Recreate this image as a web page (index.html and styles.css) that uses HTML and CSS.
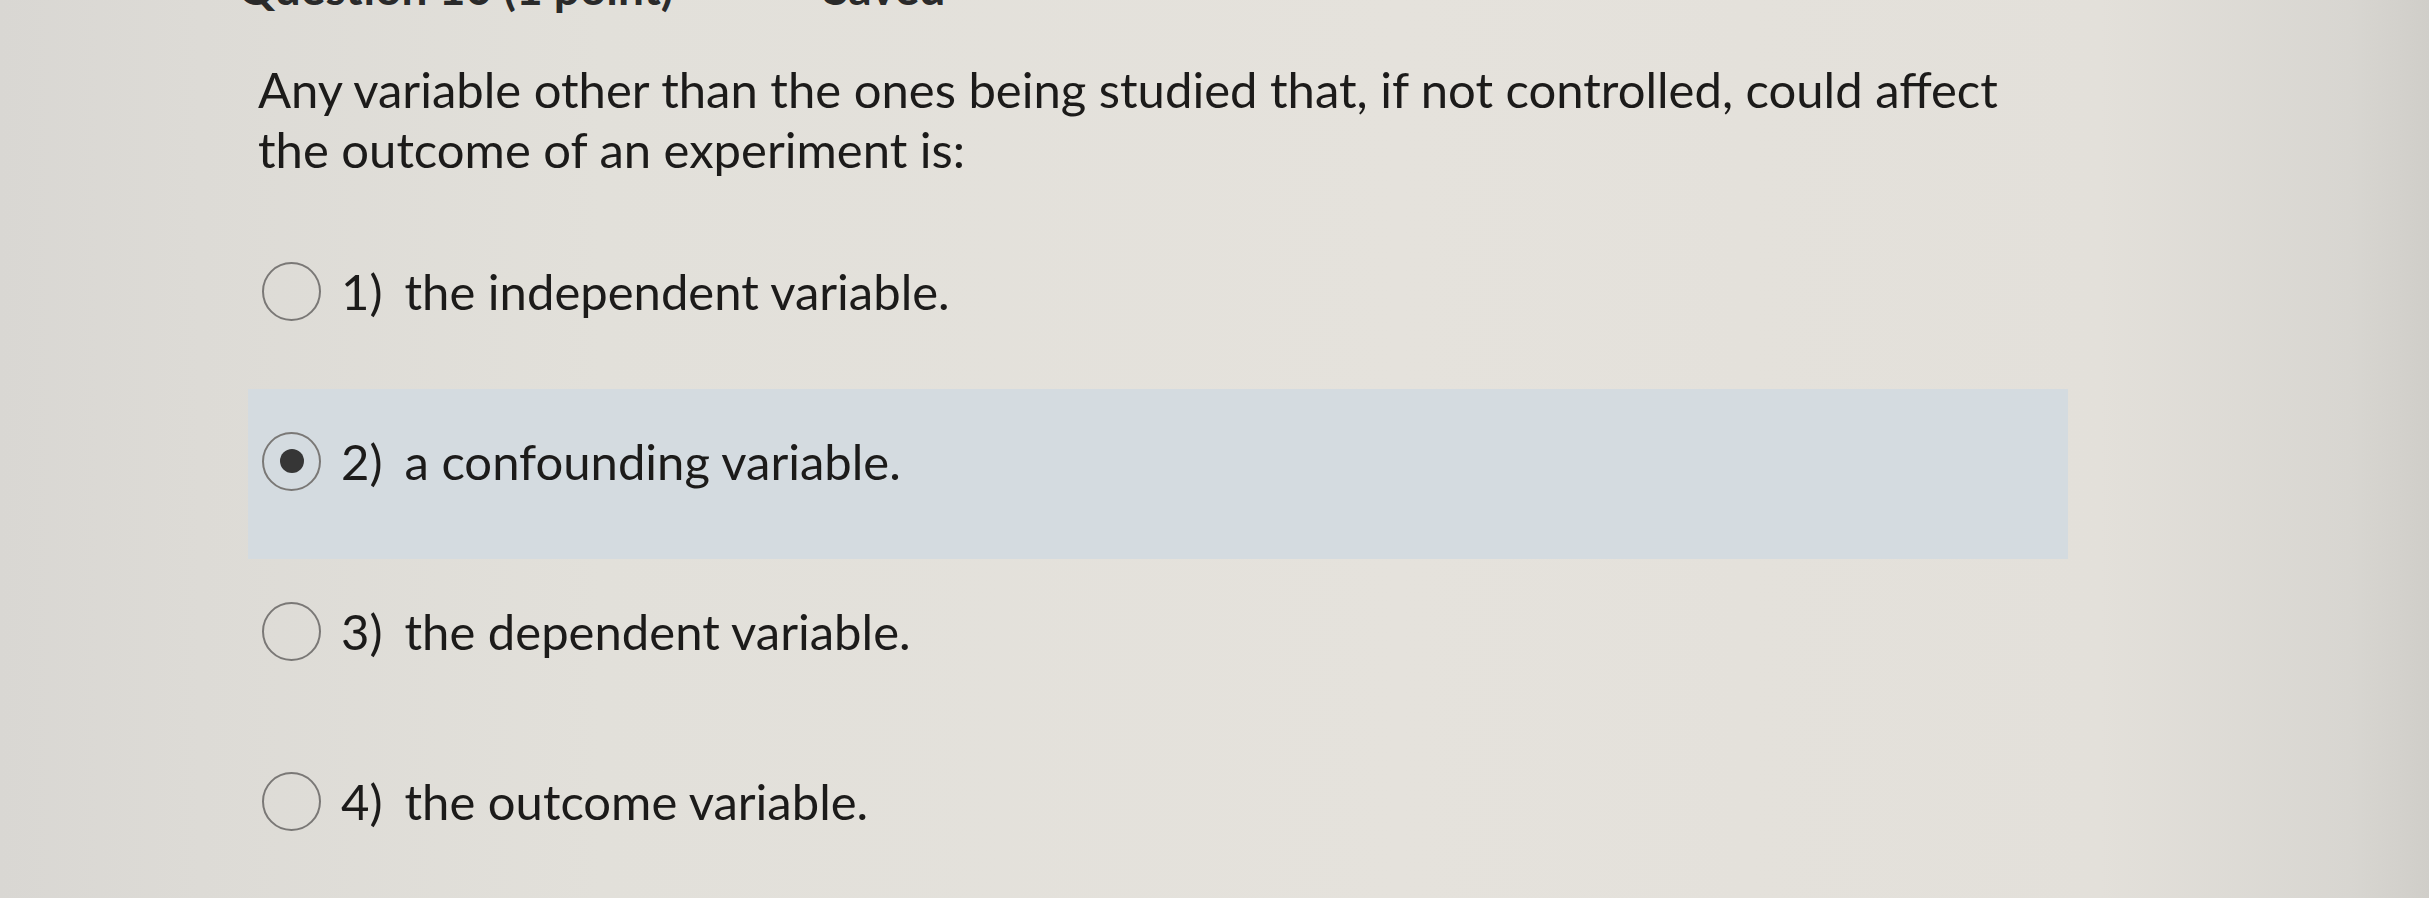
FILE: index.html
```html
<!DOCTYPE html>
<html lang="en">
<head>
<meta charset="utf-8">
<title>Question 10</title>
<link rel="stylesheet" href="styles.css">
</head>
<body>
<div class="screen">
  <div class="header">
    <span class="title">Question 10 (1 point)</span>
    <span class="saved">Saved</span>
  </div>
  <p class="question">Any variable other than the ones being studied that, if not controlled, could affect the outcome of an experiment is:</p>
  <div class="options">
    <label class="option">
      <span class="radio"></span>
      <span class="num">1)</span>
      <span class="text">the independent variable.</span>
    </label>
    <label class="option selected">
      <span class="radio"><span class="dot"></span></span>
      <span class="num">2)</span>
      <span class="text">a confounding variable.</span>
    </label>
    <label class="option">
      <span class="radio"></span>
      <span class="num">3)</span>
      <span class="text">the dependent variable.</span>
    </label>
    <label class="option">
      <span class="radio"></span>
      <span class="num">4)</span>
      <span class="text">the outcome variable.</span>
    </label>
  </div>
</div>
</body>
</html>
```

FILE: styles.css
```css
html, body {
  margin: 0;
  padding: 0;
  height: 100%;
  overflow: hidden;
}

body {
  font-family: Lato, "Open Sans", sans-serif;
  color: #1c1b1a;
  background: linear-gradient(90deg, #d9d7d3 0px, #dddbd6 200px, #e2e0da 600px, #e5e2dc 1400px, #e3e0da 2100px, #d8d6d1 2350px, #d0cec9 2429px);
}

.screen {
  height: 898px;
  box-sizing: border-box;
}

.header {
  display: flex;
  gap: 150px;
  margin-top: -36px;
  padding-left: 238px;
  font-size: 46px;
  font-weight: 700;
  line-height: 48px;
  color: #2a2a2a;
}

.question {
  margin: 47px 0 0 0;
  padding-left: 258px;
  width: 1780px;
  font-size: 49px;
  line-height: 60px;
}

.options {
  display: flex;
  flex-direction: column;
  margin-top: 40px;
  width: 2068px;
}

.option {
  display: flex;
  align-items: center;
  height: 170px;
  padding: 0 0 26px 0;
  box-sizing: border-box;
  font-size: 49px;
}

.option.selected {
  background: #d4dbe0;
  margin-left: 248px;
  padding-left: 0;
}

.option.selected .radio {
  margin-left: 14px;
}

.radio {
  width: 55px;
  height: 55px;
  border: 2.5px solid #7a7876;
  border-radius: 50%;
  margin-left: 262px;
  display: flex;
  align-items: center;
  justify-content: center;
  flex: none;
}

.dot {
  width: 24px;
  height: 24px;
  border-radius: 50%;
  background: #363636;
}

.num {
  margin-left: 20px;
}

.text {
  margin-left: 22px;
}
```
